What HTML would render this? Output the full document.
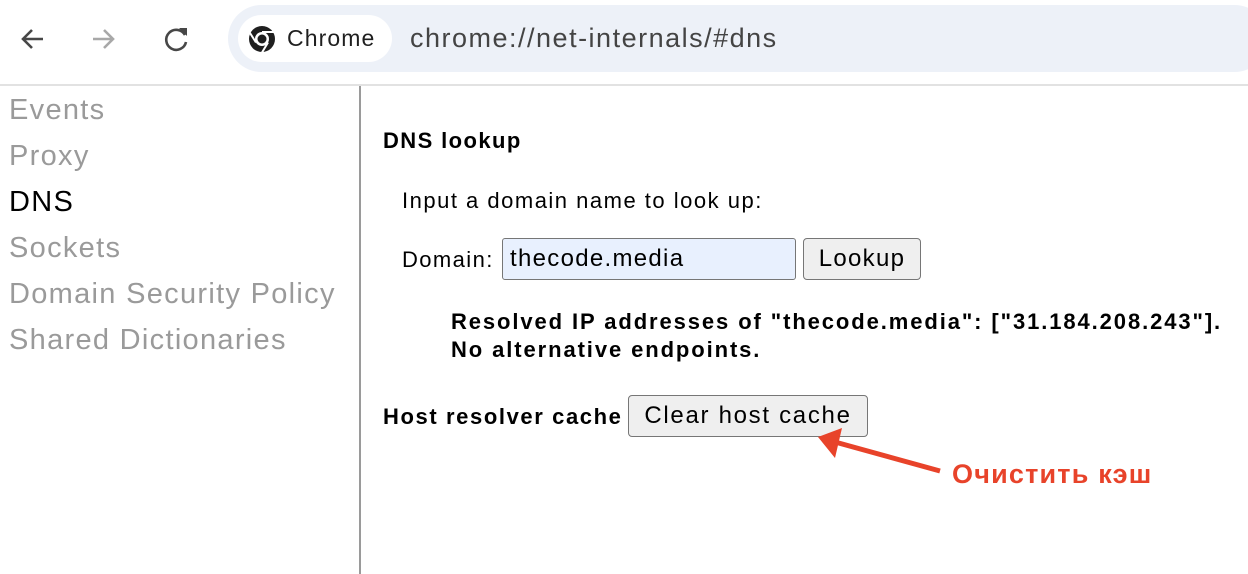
<!DOCTYPE html>
<html><head><meta charset="utf-8"><style>
*{margin:0;padding:0;box-sizing:border-box}
body{width:1248px;height:574px;overflow:hidden;background:#fff;font-family:"Liberation Sans",Arial,sans-serif;position:relative}
.a{position:absolute;white-space:nowrap}
.side{font-size:29px;color:#9a9a9a;letter-spacing:1.3px}
.btn{position:absolute;background:#efefef;border:1.5px solid #767676;border-radius:4px;font-size:24px;color:#000;display:flex;align-items:center;justify-content:center}
</style></head><body>
<svg class="a" style="left:18px;top:24px" width="30" height="30" viewBox="0 0 30 30"><path d="M25 15H6M14 6l-9 9 9 9" fill="none" stroke="#474747" stroke-width="2.6"/></svg>
<svg class="a" style="left:88px;top:24px" width="30" height="30" viewBox="0 0 30 30"><path d="M5 15h19M16 6l9 9-9 9" fill="none" stroke="#a8a8a8" stroke-width="2.6"/></svg>
<svg class="a" style="left:162px;top:24px" width="30" height="30" viewBox="0 0 30 30"><path d="M23 11A10 10 0 1 0 24 18" fill="none" stroke="#474747" stroke-width="2.6"/><path d="M17 4h8v8z" fill="#474747"/></svg>
<div class="a" style="left:228px;top:5px;width:1040px;height:67px;background:#edf1f8;border-radius:34px"></div>
<div class="a" style="left:238px;top:15px;width:154px;height:47px;background:#fff;border-radius:24px"></div>
<svg class="a" style="left:248px;top:25px" width="28" height="28" viewBox="0 0 28 28"><circle cx="14" cy="14" r="13" fill="#1f1f1f"/><circle cx="14" cy="14" r="7" fill="#fff"/><circle cx="14" cy="14" r="4.5" fill="#1f1f1f"/><path d="M14 7h12M8 17.5 2 8M20 17.5l-6 10" stroke="#fff" stroke-width="2"/></svg>
<div class="a" style="left:287px;top:25px;font-size:23px;color:#1f1f1f;letter-spacing:1.1px">Chrome</div>
<div class="a" style="left:410px;top:23px;font-size:27px;color:#444;letter-spacing:1.5px">chrome://net-internals/#dns</div>
<div class="a" style="left:0;top:84px;width:1248px;height:2px;background:#e2e2e2"></div>
<div class="a" style="left:359px;top:86px;width:2px;height:488px;background:#9a9a9a"></div>
<div class="a side" style="left:9px;top:94px">Events</div>
<div class="a side" style="left:9px;top:140px">Proxy</div>
<div class="a side" style="left:9px;top:186px;color:#000">DNS</div>
<div class="a side" style="left:9px;top:232px">Sockets</div>
<div class="a side" style="left:9px;top:278px">Domain Security Policy</div>
<div class="a side" style="left:9px;top:324px">Shared Dictionaries</div>
<div class="a" style="left:383px;top:128px;font-size:22px;font-weight:bold;letter-spacing:1.4px">DNS lookup</div>
<div class="a" style="left:402px;top:188px;font-size:22px;letter-spacing:1.5px">Input a domain name to look up:</div>
<div class="a" style="left:402px;top:247px;font-size:22px;letter-spacing:1.4px">Domain:</div>
<div class="a" style="left:502px;top:238px;width:294px;height:42px;background:#e8f0fe;border:1.5px solid #767676;border-radius:3px;font-size:24px;padding:6px 0 0 7px;letter-spacing:1.3px">thecode.media</div>
<div class="btn" style="left:803px;top:238px;width:118px;height:42px;letter-spacing:1.3px">Lookup</div>
<div class="a" style="left:451px;top:308px;font-size:22px;font-weight:bold;line-height:28px;letter-spacing:1.9px">Resolved IP addresses of "thecode.media": ["31.184.208.243"].<br>No alternative endpoints.</div>
<div class="a" style="left:383px;top:404px;font-size:22px;font-weight:bold;letter-spacing:1.6px">Host resolver cache</div>
<div class="btn" style="left:628px;top:395px;width:240px;height:42px;letter-spacing:1.7px">Clear host cache</div>
<svg class="a" style="left:800px;top:425px" width="150" height="60" viewBox="0 0 150 60"><path d="M140 46 35 17" stroke="#e8432a" stroke-width="5"/><path d="M18 12 42 3 35 33z" fill="#e8432a"/></svg>
<div class="a" style="left:952px;top:459px;font-size:27px;font-weight:bold;color:#e8432a;letter-spacing:1.2px">Очистить кэш</div>
</body></html>
